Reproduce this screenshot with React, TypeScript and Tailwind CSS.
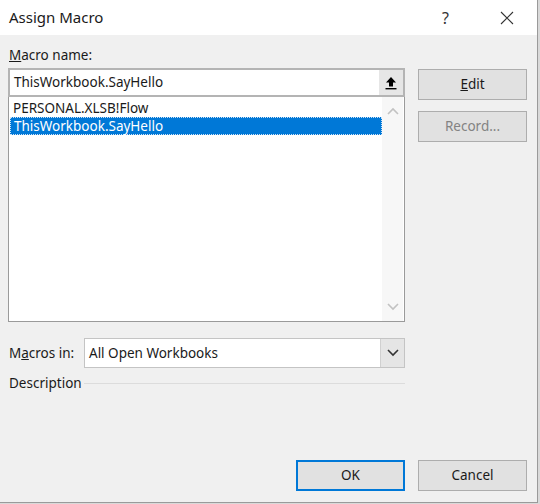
import React from 'react';

const font = { fontFamily: '"Noto Sans", "Segoe UI", sans-serif' };

const Chevron: React.FC<{ dir: 'up' | 'down'; className?: string }> = ({ dir, className }) => (
  <svg width="12" height="8" viewBox="0 0 12 8" className={className}>
    <polyline
      points={dir === 'up' ? '1,7 6,2 11,7' : '1,1 6,6 11,1'}
      fill="none"
      stroke="currentColor"
      strokeWidth="1.6"
    />
  </svg>
);

const Button: React.FC<{ children: React.ReactNode; disabled?: boolean; primary?: boolean; className?: string }> = ({
  children,
  disabled,
  primary,
  className = '',
}) => (
  <button
    className={`h-[31px] w-[109px] flex items-center justify-center bg-[#e1e1e1] text-[13.5px] ${
      primary ? 'border-2 border-[#0078d7]' : 'border border-[#adadad]'
    } ${disabled ? 'text-[#838383]' : 'text-[#1a1a1a]'} ${className}`}
  >
    {children}
  </button>
);

export default function App() {
  return (
    <div className="w-[540px] h-[504px] bg-[#d9d9d9] overflow-hidden" style={font}>
      <div className="w-[538px] h-[503px] flex flex-col border-r border-b border-[#9a9a9a] bg-[#f0f0f0] text-[#1a1a1a]">
        {/* title bar */}
        <div className="h-[35px] bg-white flex items-center pl-[9px] shrink-0">
          <span className="text-[15px] flex-1">Assign Macro</span>
          <span className="text-[16px] text-[#333] mr-[51px]">?</span>
          <svg width="14" height="14" viewBox="0 0 14 14" className="mr-[23px] text-[#333]">
            <path d="M1 1 L13 13 M13 1 L1 13" stroke="currentColor" strokeWidth="1.1" />
          </svg>
        </div>

        {/* body */}
        <div className="flex-1 flex flex-col pl-[8px] pt-[10px] text-[13.5px]">
          <div className="leading-[20px] pl-[1px]">
            <span className="underline">M</span>acro name:
          </div>

          <div className="flex gap-[13px] mt-[3px]">
            <div className="w-[397px] flex flex-col">
              <div className="h-[29px] bg-white border-2 border-[#b4b4b4] flex items-center">
                <span className="flex-1 pl-[4px]">ThisWorkbook.SayHello</span>
                <div className="w-[24px] h-full bg-[#e6e6e6] flex items-center justify-center">
                  <svg width="12" height="14" viewBox="0 0 12 14">
                    <polygon points="6,1 11,6.5 8,6.5 8,10.5 4,10.5 4,6.5 1,6.5" fill="#000" />
                    <rect x="0.5" y="12" width="11" height="1.4" fill="#000" />
                  </svg>
                </div>
              </div>
              <div className="h-[225px] bg-white border border-[#9a9a9a] border-t-0 flex">
                <div className="flex-1 pt-[2px] pl-[1px]">
                  <div className="h-[18px] leading-[18px] pl-[3px]">PERSONAL.XLSB!Flow</div>
                  <div className="h-[18px] leading-[16px] pl-[3px] bg-[#0078d7] text-white border border-dotted border-[#cfe3f7]">
                    ThisWorkbook.SayHello
                  </div>
                </div>
                <div className="w-[21px] mr-[1px] bg-[#f7f7f7] flex flex-col items-center justify-between py-[10px] text-[#c2c2c2]">
                  <Chevron dir="up" />
                  <Chevron dir="down" />
                </div>
              </div>
            </div>

            <div className="flex flex-col pt-[1px]">
              <Button>
                <span className="underline">E</span>dit
              </Button>
              <Button disabled className="mt-[11px]">
                Record...
              </Button>
            </div>
          </div>

          <div className="flex items-center mt-[16px] w-[397px]">
            <div className="w-[76px] shrink-0 pl-[1px]">
              M<span className="underline">a</span>cros in:
            </div>
            <div className="flex-1 h-[30px] bg-white border border-[#c4c4c4] flex items-center">
              <span className="flex-1 pl-[4px]">All Open Workbooks</span>
              <div className="w-[24px] h-[28px] bg-[#e5e5e5] border-l border-[#d0d0d0] flex items-center justify-center text-[#333]">
                <Chevron dir="down" />
              </div>
            </div>
          </div>

          <div className="flex items-center justify-between mt-[4px] w-[397px] h-[22px]">
            <span className="pl-[1px]">Description</span>
            <div className="w-[321px] h-px bg-[#dcdcdc]" />
          </div>

          <div className="flex-1" />

          <div className="flex justify-end gap-[13px] pr-[10px] mb-[11px]">
            <Button primary className="w-[108px]">OK</Button>
            <Button>Cancel</Button>
          </div>
        </div>
      </div>
    </div>
  );
}
